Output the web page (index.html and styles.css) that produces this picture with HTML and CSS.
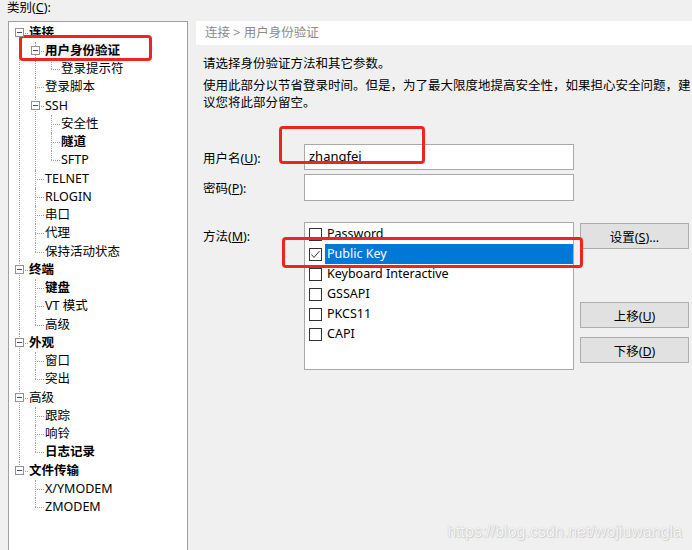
FILE: index.html
```html
<!DOCTYPE html>
<html lang="zh-CN">
<head>
    <meta charset="UTF-8">
    <title>会话选项 - 用户身份验证</title>
    <link rel="stylesheet" href="styles.css">
</head>
<body>
    <div class="dialog">
        <div class="left">
            <div class="cat-label">类别(<u>C</u>):</div>
            <div class="tree-box">
                <ul class="tree">
                    <li><div class="row"><i class="exp"></i><span class="b">连接</span></div>
                        <ul>
                            <li><div class="row"><i class="exp"></i><span class="b sel">用户身份验证</span></div>
                                <ul>
                                    <li><div class="row"><i class="leaf"></i><span>登录提示符</span></div></li>
                                </ul>
                            </li>
                            <li><div class="row"><i class="leaf"></i><span>登录脚本</span></div></li>
                            <li><div class="row"><i class="exp"></i><span>SSH</span></div>
                                <ul>
                                    <li><div class="row"><i class="leaf"></i><span>安全性</span></div></li>
                                    <li><div class="row"><i class="leaf"></i><span class="b">隧道</span></div></li>
                                    <li><div class="row"><i class="leaf"></i><span>SFTP</span></div></li>
                                </ul>
                            </li>
                            <li><div class="row"><i class="leaf"></i><span>TELNET</span></div></li>
                            <li><div class="row"><i class="leaf"></i><span>RLOGIN</span></div></li>
                            <li><div class="row"><i class="leaf"></i><span>串口</span></div></li>
                            <li><div class="row"><i class="leaf"></i><span>代理</span></div></li>
                            <li><div class="row"><i class="leaf"></i><span>保持活动状态</span></div></li>
                        </ul>
                    </li>
                    <li><div class="row"><i class="exp"></i><span class="b">终端</span></div>
                        <ul>
                            <li><div class="row"><i class="leaf"></i><span class="b">键盘</span></div></li>
                            <li><div class="row"><i class="leaf"></i><span>VT 模式</span></div></li>
                            <li><div class="row"><i class="leaf"></i><span>高级</span></div></li>
                        </ul>
                    </li>
                    <li><div class="row"><i class="exp"></i><span class="b">外观</span></div>
                        <ul>
                            <li><div class="row"><i class="leaf"></i><span>窗口</span></div></li>
                            <li><div class="row"><i class="leaf"></i><span>突出</span></div></li>
                        </ul>
                    </li>
                    <li><div class="row"><i class="exp"></i><span>高级</span></div>
                        <ul>
                            <li><div class="row"><i class="leaf"></i><span>跟踪</span></div></li>
                            <li><div class="row"><i class="leaf"></i><span>响铃</span></div></li>
                            <li><div class="row"><i class="leaf"></i><span class="b">日志记录</span></div></li>
                        </ul>
                    </li>
                    <li><div class="row"><i class="exp"></i><span class="b">文件传输</span></div>
                        <ul>
                            <li><div class="row"><i class="leaf"></i><span>X/YMODEM</span></div></li>
                            <li><div class="row"><i class="leaf"></i><span>ZMODEM</span></div></li>
                        </ul>
                    </li>
                </ul>
            </div>
        </div>

        <div class="right">
            <div class="crumb">连接 &gt; 用户身份验证</div>
            <div class="content">
                <p class="desc first">请选择身份验证方法和其它参数。</p>
                <p class="desc">使用此部分以节省登录时间。但是，为了最大限度地提高安全性，如果担心安全问题，建<br>议您将此部分留空。</p>

                <div class="form-row user-row">
                    <label>用户名(<u>U</u>):</label>
                    <div class="field">zhangfei</div>
                </div>
                <div class="form-row pass-row">
                    <label>密码(<u>P</u>):</label>
                    <div class="field tall"></div>
                </div>

                <div class="method">
                    <label>方法(<u>M</u>):</label>
                    <div class="list">
                        <div class="item"><i class="check"></i><span>Password</span></div>
                        <div class="item active"><i class="check"><svg width="11" height="11" viewBox="0 0 11 11"><polyline points="1.5,5.5 4,8.5 9.5,2" fill="none" stroke="#333" stroke-width="1"/></svg></i><span>Public Key</span></div>
                        <div class="item"><i class="check"></i><span>Keyboard Interactive</span></div>
                        <div class="item"><i class="check"></i><span>GSSAPI</span></div>
                        <div class="item"><i class="check"></i><span>PKCS11</span></div>
                        <div class="item"><i class="check"></i><span>CAPI</span></div>
                    </div>
                    <div class="buttons">
                        <button>设置(<u>S</u>)...</button>
                        <button class="up">上移(<u>U</u>)</button>
                        <button>下移(<u>D</u>)</button>
                    </div>
                </div>
            </div>
        </div>
    </div>

    <div class="mark mark-tree"></div>
    <div class="mark mark-user"></div>
    <div class="mark mark-key"></div>
    <div class="watermark">https://blog.csdn.net/wojiuwangla</div>
</body>
</html>
```

FILE: styles.css
```css
html, body {
    margin: 0;
    padding: 0;
}
body {
    width: 692px;
    height: 550px;
    overflow: hidden;
    position: relative;
    background-color: #f0f0f0;
    font-family: "Noto Sans", "Noto Sans CJK SC", sans-serif;
    font-size: 12.5px;
    color: #000;
}
u {
    text-decoration: underline;
    text-underline-offset: 1px;
}
.dialog {
    display: flex;
}

/* left: category tree */
.left {
    width: 180px;
    margin-left: 8px;
}
.cat-label {
    height: 20px;
    padding-top: 1px;
    line-height: 13px;
    margin-left: -1px;
}
.tree-box {
    height: 540px;
    background-color: white;
    border: 1px solid #a0a0a0;
    border-bottom: none;
}
.tree, .tree ul {
    list-style: none;
    margin: 0;
    padding: 0;
}
.tree {
    padding-left: 6px;
    padding-top: 1.5px;
}
.tree ul {
    padding-left: 16px;
}
.tree li {
    position: relative;
}
.tree li::before {
    content: "";
    position: absolute;
    left: 4px;
    top: 0;
    bottom: 0;
    border-left: 1px dotted #a0a0a0;
}
.tree > li:first-child::before {
    top: 9px;
}
.tree li:last-child::before {
    bottom: auto;
    height: 9px;
}
.tree li::after {
    content: "";
    position: absolute;
    left: 4px;
    top: 9px;
    width: 9px;
    border-top: 1px dotted #a0a0a0;
}
.row {
    display: flex;
    align-items: center;
    height: 18.25px;
    line-height: 16px;
    white-space: nowrap;
}
.exp, .leaf {
    flex: none;
    width: 9px;
    height: 9px;
    margin-right: 5px;
    box-sizing: border-box;
}
.exp {
    position: relative;
    z-index: 1;
    background-color: white;
    border: 1px solid #919191;
}
.exp::after {
    content: "";
    position: absolute;
    left: 1px;
    top: 3px;
    width: 5px;
    height: 1px;
    background-color: #3e4f7a;
}
.b {
    font-weight: bold;
}
.sel {
    background-color: #f2f2f2;
}

/* right: options page */
.right {
    flex: 1;
    margin-left: 8px;
    margin-top: 21px;
}
.crumb {
    height: 24px;
    line-height: 24px;
    background-color: white;
    padding-left: 9px;
    color: #8a8a8a;
}
.content {
    padding-left: 7px;
}
.desc {
    margin: 5px 0 0 0;
    line-height: 17px;
    white-space: nowrap;
}
.desc.first {
    margin-top: 10px;
}
.form-row {
    display: flex;
    align-items: center;
}
.form-row label, .method label {
    width: 101px;
    flex: none;
}
.user-row {
    margin-top: 33px;
}
.pass-row {
    margin-top: 4px;
}
.field {
    width: 270px;
    height: 26px;
    box-sizing: border-box;
    background-color: white;
    border: 1px solid #a9a9a9;
    padding-left: 4px;
    line-height: 22px;
    font-size: 13px;
}
.field.tall {
    height: 27px;
}
.method {
    display: flex;
    margin-top: 21px;
}
.method label {
    padding-top: 6px;
    line-height: 17px;
}
.list {
    width: 270px;
    height: 148px;
    box-sizing: border-box;
    background-color: white;
    border: 1px solid #a9a9a9;
    padding: 1px 0 0 0;
}
.item {
    display: flex;
    align-items: center;
    height: 20px;
}
.check {
    flex: none;
    width: 13px;
    height: 13px;
    box-sizing: border-box;
    border: 1px solid #333;
    margin-left: 4px;
    margin-right: 3px;
    display: flex;
    align-items: center;
    justify-content: center;
}
.item span {
    flex: 1;
    height: 20px;
    line-height: 20px;
    padding-left: 2px;
}
.item.active span {
    background-color: #0078d7;
    color: white;
}
.buttons {
    display: flex;
    flex-direction: column;
    margin-left: 6px;
    padding-top: 1px;
}
.buttons button {
    width: 109px;
    height: 26px;
    background-color: #e1e1e1;
    border: 1px solid #adadad;
    font-family: inherit;
    font-size: 12.5px;
    color: #000;
    padding: 0;
}
.buttons button.up {
    margin-top: 53px;
    margin-bottom: 9px;
}

/* red annotation boxes drawn over the screenshot */
.mark {
    position: absolute;
    border: 3px solid #ee2420;
    border-radius: 4px;
    box-sizing: border-box;
}
.mark-tree {
    left: 19px;
    top: 35px;
    width: 133px;
    height: 26px;
}
.mark-user {
    left: 279px;
    top: 126px;
    width: 146px;
    height: 38px;
}
.mark-key {
    left: 282px;
    top: 237px;
    width: 301px;
    height: 31px;
}
.watermark {
    position: absolute;
    right: 10px;
    top: 523px;
    font-family: "Liberation Sans", Arial, sans-serif;
    font-size: 16px;
    color: #f6f6f6;
    text-shadow: 0 0 1px #b5b5b5, 1px 1px 1px rgba(0,0,0,0.12);
}
```
